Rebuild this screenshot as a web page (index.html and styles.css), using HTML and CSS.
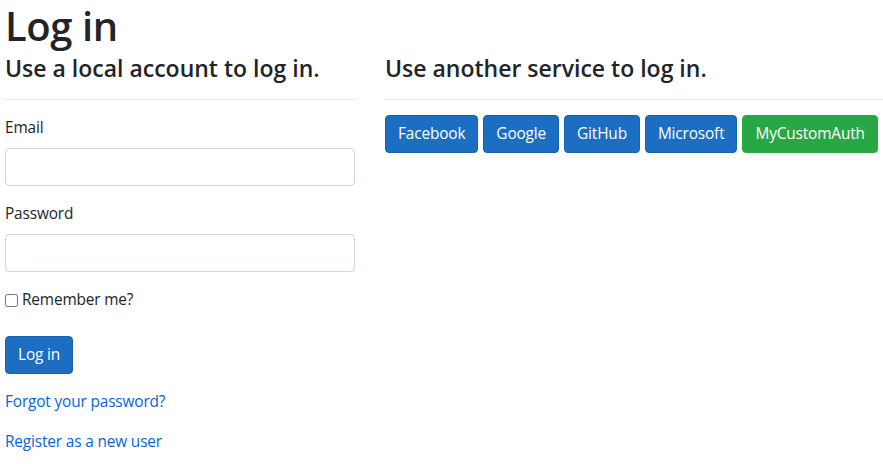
FILE: index.html
```html
<!DOCTYPE html>
<html lang="en">
<head>
<meta charset="utf-8">
<title>Log in</title>
<link rel="stylesheet" href="styles.css">
</head>
<body>
<main class="page">
  <h1 class="title">Log in</h1>
  <div class="row">
    <section class="col-left">
      <h4 class="subtitle">Use a local account to log in.</h4>
      <hr class="rule">
      <form class="form">
        <div class="form-group">
          <label class="label" for="email">Email</label>
          <input class="input" id="email" type="email">
        </div>
        <div class="form-group">
          <label class="label" for="password">Password</label>
          <input class="input" id="password" type="password">
        </div>
        <div class="form-group check-group">
          <label class="check-label"><input class="check" type="checkbox"> Remember me?</label>
        </div>
        <div class="form-group">
          <button class="btn btn-primary" type="button">Log in</button>
        </div>
        <p class="link-line"><a class="link" href="#">Forgot your password?</a></p>
        <p class="link-line"><a class="link" href="#">Register as a new user</a></p>
      </form>
    </section>
    <section class="col-right">
      <h4 class="subtitle">Use another service to log in.</h4>
      <hr class="rule">
      <div class="providers">
        <button class="btn btn-primary" type="button">Facebook</button>
        <button class="btn btn-primary" type="button">Google</button>
        <button class="btn btn-primary" type="button">GitHub</button>
        <button class="btn btn-primary" type="button">Microsoft</button>
        <button class="btn btn-success" type="button">MyCustomAuth</button>
      </div>
    </section>
  </div>
</main>
</body>
</html>
```

FILE: styles.css
```css
* { box-sizing: border-box; }
html, body { margin: 0; padding: 0; background: #fff; }
body {
  font-family: "Open Sans", "Noto Sans", "Liberation Sans", sans-serif;
  font-size: 15.4px;
  letter-spacing: -0.15px;
  line-height: 24px;
  color: #212529;
}
.page { padding: 0 0 0 5px; }
.title {
  font-size: 40px;
  font-weight: 600;
  letter-spacing: -0.4px;
  line-height: 46px;
  padding-top: 3px;
  margin: 0 0 5px;
}
.row { display: flex; gap: 30px; }
.col-left { width: 350px; flex: none; }
.col-right { flex: 1; }
.subtitle {
  font-size: 23px;
  font-weight: 600;
  letter-spacing: 0;
  line-height: 29px;
  margin: 0 0 8px;
}
.rule {
  border: 0;
  border-top: 1px solid rgba(0,0,0,0.1);
  margin: 16px 0;
}
.form-group { margin-bottom: 16px; }
.label { display: block; margin-bottom: 8px; }
.input {
  display: block;
  width: 100%;
  height: 38px;
  padding: 6px 12px;
  font: inherit;
  border: 1px solid #ced4da;
  border-radius: 4px;
  background: #fff;
}
.check-group { margin-bottom: 24px; }
.check-label { display: flex; align-items: center; }
.check { margin: 0 4px 0 0; width: 13px; height: 13px; }
.btn {
  display: inline-block;
  font: inherit;
  letter-spacing: inherit;
  line-height: 24px;
  padding: 6px 12px;
  border: 1px solid transparent;
  border-radius: 4px;
  color: #fff;
  cursor: pointer;
}
.btn-primary { background: #1b6ec2; border-color: #1861ac; }
.btn-success { background: #28a745; border-color: #28a745; }
.providers { display: flex; gap: 5px; margin-top: -1px; }
.link-line { margin: 0 0 16px; }
.link { color: #0366d6; text-decoration: none; }
```
